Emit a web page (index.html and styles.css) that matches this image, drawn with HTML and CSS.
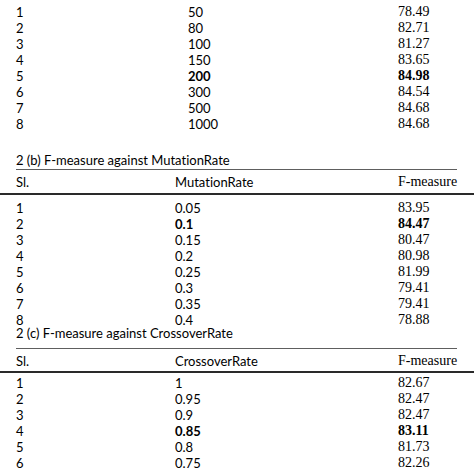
FILE: index.html
```html
<!DOCTYPE html>
<html>
<head>
<meta charset="utf-8">
<link rel="stylesheet" href="styles.css">
</head>
<body>
<section class="tbl tbl-a">
  <div class="rows">
    <div class="row"><span class="c1">1</span><span class="c2">50</span><span class="c3">78.49</span></div>
    <div class="row"><span class="c1">2</span><span class="c2">80</span><span class="c3">82.71</span></div>
    <div class="row"><span class="c1">3</span><span class="c2">100</span><span class="c3">81.27</span></div>
    <div class="row"><span class="c1">4</span><span class="c2">150</span><span class="c3">83.65</span></div>
    <div class="row"><span class="c1">5</span><span class="c2 b">200</span><span class="c3 b">84.98</span></div>
    <div class="row"><span class="c1">6</span><span class="c2">300</span><span class="c3">84.54</span></div>
    <div class="row"><span class="c1">7</span><span class="c2">500</span><span class="c3">84.68</span></div>
    <div class="row"><span class="c1">8</span><span class="c2">1000</span><span class="c3">84.68</span></div>
  </div>
</section>

<section class="tbl tbl-b">
  <div class="caption">2 (b) F-measure against MutationRate</div>
  <div class="head row"><span class="c1">Sl.</span><span class="c2">MutationRate</span><span class="c3">F-measure</span></div>
  <div class="rows">
    <div class="row"><span class="c1">1</span><span class="c2">0.05</span><span class="c3">83.95</span></div>
    <div class="row"><span class="c1">2</span><span class="c2 b">0.1</span><span class="c3 b">84.47</span></div>
    <div class="row"><span class="c1">3</span><span class="c2">0.15</span><span class="c3">80.47</span></div>
    <div class="row"><span class="c1">4</span><span class="c2">0.2</span><span class="c3">80.98</span></div>
    <div class="row"><span class="c1">5</span><span class="c2">0.25</span><span class="c3">81.99</span></div>
    <div class="row"><span class="c1">6</span><span class="c2">0.3</span><span class="c3">79.41</span></div>
    <div class="row"><span class="c1">7</span><span class="c2">0.35</span><span class="c3">79.41</span></div>
    <div class="row"><span class="c1">8</span><span class="c2">0.4</span><span class="c3">78.88</span></div>
  </div>
</section>

<section class="tbl tbl-c">
  <div class="caption">2 (c) F-measure against CrossoverRate</div>
  <div class="head row"><span class="c1">Sl.</span><span class="c2">CrossoverRate</span><span class="c3">F-measure</span></div>
  <div class="rows">
    <div class="row"><span class="c1">1</span><span class="c2">1</span><span class="c3">82.67</span></div>
    <div class="row"><span class="c1">2</span><span class="c2">0.95</span><span class="c3">82.47</span></div>
    <div class="row"><span class="c1">3</span><span class="c2">0.9</span><span class="c3">82.47</span></div>
    <div class="row"><span class="c1">4</span><span class="c2 b">0.85</span><span class="c3 b">83.11</span></div>
    <div class="row"><span class="c1">5</span><span class="c2">0.8</span><span class="c3">81.73</span></div>
    <div class="row"><span class="c1">6</span><span class="c2">0.75</span><span class="c3">82.26</span></div>
  </div>
</section>
</body>
</html>
```
FILE: styles.css
```css
html, body {
  margin: 0;
  padding: 0;
  background: #fff;
  overflow: hidden;
}
body {
  width: 474px;
  height: 474px;
  color: #000;
  font-family: Lato, "Open Sans", sans-serif;
  font-size: 13px;
  font-variant-ligatures: none;
  font-feature-settings: "liga" 0, "clig" 0;
}
.row {
  display: grid;
  grid-template-columns: 159px 223px auto;
  height: 16px;
  line-height: 16px;
  padding-left: 16px;
  white-space: nowrap;
}
.tbl-a .row {
  grid-template-columns: 172px 210px auto;
}
.c3 {
  font-family: "Liberation Serif", "Times New Roman", serif;
  font-size: 14px;
}
.b {
  font-weight: bold;
}
.caption {
  height: 16px;
  line-height: 16px;
  padding-left: 16px;
  white-space: nowrap;
}
.head {
  margin-left: 16px;
  padding-left: 0;
  width: 441px;
  border-top: 1px solid #5e5e5e;
  height: 16px;
}
.rows {
  border-top: 2px solid #2a2a2a;
}
.tbl-a .rows {
  border-top: none;
  padding-top: 4px;
}
.tbl-b {
  margin-top: 20px;
}
.tbl-b .head {
  margin-top: 1px;
  padding-top: 4px;
  margin-bottom: 3px;
}
.tbl-b .rows {
  padding-top: 5px;
}
.tbl-c {
  margin-top: -2px;
}
.tbl-c .caption {
  line-height: 14px;
  height: 14px;
}
.tbl-c .head {
  margin-top: 8px;
  padding-top: 4px;
  margin-bottom: 2px;
}
.tbl-c .rows {
  padding-top: 2px;
}
```
